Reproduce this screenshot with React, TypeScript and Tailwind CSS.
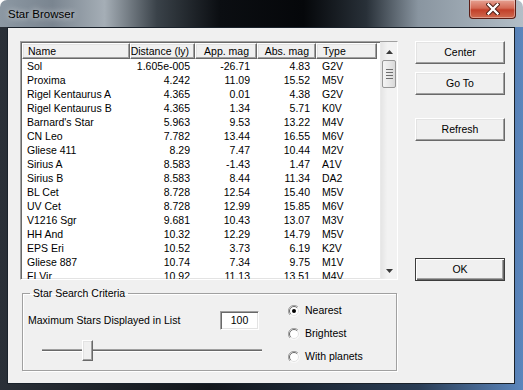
import { Fragment } from "react";

type Star = [string, string, string, string, string];

const STARS: Star[] = [
  ["Sol", "1.605e-005", "-26.71", "4.83", "G2V"],
  ["Proxima", "4.242", "11.09", "15.52", "M5V"],
  ["Rigel Kentaurus A", "4.365", "0.01", "4.38", "G2V"],
  ["Rigel Kentaurus B", "4.365", "1.34", "5.71", "K0V"],
  ["Barnard's Star", "5.963", "9.53", "13.22", "M4V"],
  ["CN Leo", "7.782", "13.44", "16.55", "M6V"],
  ["Gliese 411", "8.29", "7.47", "10.44", "M2V"],
  ["Sirius A", "8.583", "-1.43", "1.47", "A1V"],
  ["Sirius B", "8.583", "8.44", "11.34", "DA2"],
  ["BL Cet", "8.728", "12.54", "15.40", "M5V"],
  ["UV Cet", "8.728", "12.99", "15.85", "M6V"],
  ["V1216 Sgr", "9.681", "10.43", "13.07", "M3V"],
  ["HH And", "10.32", "12.29", "14.79", "M5V"],
  ["EPS Eri", "10.52", "3.73", "6.19", "K2V"],
  ["Gliese 887", "10.74", "7.34", "9.75", "M1V"],
  ["FI Vir", "10.92", "11.13", "13.51", "M4V"],
];

const COLUMNS = [
  { label: "Name", w: "w-[108px]", cell: "justify-start pl-[5px]" },
  { label: "Distance (ly)", w: "w-[65px]", cell: "justify-end pr-[5px]" },
  { label: "App. mag", w: "w-[62px]", cell: "justify-end pr-[7px]" },
  { label: "Abs. mag", w: "w-[59px]", cell: "justify-end pr-[6px]" },
  { label: "Type", w: "w-[61px]", cell: "justify-start pl-[6px]" },
];

const raised =
  "border border-t-white border-l-white border-r-[#696969] border-b-[#696969] shadow-[inset_-1px_-1px_#a0a0a0,inset_1px_1px_#e3e3e3]";
const sunken =
  "border border-t-[#a0a0a0] border-l-[#a0a0a0] border-r-white border-b-white shadow-[inset_1px_1px_#696969,inset_-1px_-1px_#e3e3e3]";

function Button({ label, isDefault }: { label: string; isDefault?: boolean }) {
  return (
    <button
      className={`flex h-[23px] w-[90px] items-center justify-center bg-[#f0f0f0] text-black ${
        isDefault
          ? "border border-[#3c3c3c] shadow-[inset_1px_1px_white,inset_-1px_-1px_#696969,inset_-2px_-2px_#a0a0a0]"
          : raised
      }`}
    >
      {label}
    </button>
  );
}

function Radio({ label, checked }: { label: string; checked?: boolean }) {
  return (
    <div className="flex h-[23px] items-center gap-[5px]">
      <svg width="12" height="12" viewBox="0 0 12 12">
        <circle cx="6" cy="6" r="5.5" fill="#fff" />
        <path d="M10 2 A5.5 5.5 0 0 0 2 10" fill="none" stroke="#a0a0a0" strokeWidth="1" />
        <path d="M9.2 2.8 A4.5 4.5 0 0 0 2.8 9.2" fill="none" stroke="#696969" strokeWidth="1" />
        <path d="M2 10 A5.5 5.5 0 0 0 10 2" fill="none" stroke="#f8f8f8" strokeWidth="1" />
        <path d="M2.8 9.2 A4.5 4.5 0 0 0 9.2 2.8" fill="none" stroke="#e3e3e3" strokeWidth="1" />
        {checked && <circle cx="6" cy="6" r="2" fill="#000" />}
      </svg>
      <span>{label}</span>
    </div>
  );
}

function ScrollArrow({ down }: { down?: boolean }) {
  return (
    <div className="flex h-[17px] items-center justify-center">
      <svg width="7" height="4" viewBox="0 0 7 4">
        <path d={down ? "M0 0 H7 L3.5 4 Z" : "M3.5 0 L7 4 H0 Z"} fill="#3a3a3a" />
      </svg>
    </div>
  );
}

export default function App() {
  return (
    <div className="flex h-[390px] w-[523px] flex-col overflow-hidden rounded-t-[7px] bg-[linear-gradient(90deg,#8c98a3_0%,#7a8590_10%,#a5aeb6_20%,#3a4249_30%,#0b0e12_42%,#05070a_58%,#283038_70%,#8995a0_80%,#b3bec7_100%)] font-['Liberation_Sans',Arial,sans-serif] text-[10.5px] leading-[13px] text-black">
      {/* title bar */}
      <div className="flex h-[27px] shrink-0 items-start justify-between">
        <span className="pl-2 pt-[7px] text-[11.5px] leading-[14px] text-black [text-shadow:0_0_6px_rgba(255,255,255,0.9)]">
          Star Browser
        </span>
        <div className="mr-[7px] flex h-[19px] w-[47px] items-center justify-center rounded-b-[4px] border border-t-0 border-[#5b1e16] bg-[linear-gradient(180deg,#e6a192_0%,#d46a55_45%,#c2402a_55%,#cf6a4f_100%)] shadow-[inset_0_0_0_1px_rgba(255,255,255,0.35)]">
          <svg width="14" height="12" viewBox="0 0 14 12">
            <path d="M2.5 1.5 L11.5 10.5 M11.5 1.5 L2.5 10.5" stroke="#4a1a12" strokeWidth="4.2" strokeLinecap="square" />
            <path d="M2.5 1.5 L11.5 10.5 M11.5 1.5 L2.5 10.5" stroke="#fff" strokeWidth="2.4" strokeLinecap="square" />
          </svg>
        </div>
      </div>

      {/* frame + client */}
      <div className="flex flex-1 bg-[linear-gradient(90deg,#2a3038_0%,#12161b_40%,#2a3d55_80%,#5b86bd_100%)] pb-[6px] pl-[7px] pr-[8px]">
        <div className="flex flex-1 border border-[#1a222b] bg-[#f0f0f0] pl-[12px] pt-[13px]">
          <div className="flex w-[378px] flex-col">
            {/* list view */}
            <div className={`flex h-[239px] w-[378px] bg-white ${sunken}`}>
              <div className="flex-1 overflow-hidden pl-px pt-px">
                <div className="flex h-[16px]">
                  {COLUMNS.map((c) => (
                    <div
                      key={c.label}
                      className={`flex shrink-0 items-center overflow-hidden whitespace-nowrap ${c.w} ${c.cell} bg-[#f0f0f0] ${raised}`}
                    >
                      {c.label}
                    </div>
                  ))}
                </div>
                {STARS.map((s) => (
                  <div key={s[0]} className="flex h-[14px] items-center">
                    {COLUMNS.map((c, i) => (
                      <Fragment key={c.label}>
                        <div className={`flex shrink-0 ${c.w} ${c.cell} whitespace-nowrap`}>{s[i]}</div>
                      </Fragment>
                    ))}
                  </div>
                ))}
              </div>
              {/* scrollbar */}
              <div className="flex w-[17px] flex-col border-l border-[#e9e9e9] bg-[linear-gradient(90deg,#e5e5e5,#f2f2f2_40%,#f2f2f2)] pt-px">
                <ScrollArrow />
                <div className="mx-[1px] flex h-[28px] flex-col items-center justify-center gap-[2px] rounded-[2px] border border-[#979797] bg-[linear-gradient(90deg,#f4f4f4,#e8e8e8_50%,#d9d9d9)]">
                  <div className="h-px w-[7px] bg-[#6e6e6e]" />
                  <div className="h-px w-[7px] bg-[#6e6e6e]" />
                  <div className="h-px w-[7px] bg-[#6e6e6e]" />
                  <div className="h-px w-[7px] bg-[#6e6e6e]" />
                </div>
                <div className="flex-1" />
                <ScrollArrow down />
              </div>
            </div>

            {/* search criteria */}
            <fieldset className="ml-[2px] mt-[7px] h-[84px] w-[375px] border border-[#a0a0a0] shadow-[1px_1px_0_white,inset_1px_1px_0_white]">
              <legend className="ml-[7px] px-[3px] leading-[13px]">Star Search Criteria</legend>
              <div className="flex items-start">
                <div className="flex flex-col pl-[5px] pt-[11px]">
                  <div className="flex items-center">
                    <span className="w-[192px]">Maximum Stars Displayed in List</span>
                    <div className={`flex h-[19px] w-[39px] items-center justify-center bg-white ${sunken}`}>
                      100
                    </div>
                  </div>
                  <div className="relative ml-[14px] mt-[10px] h-[21px] w-[220px]">
                    <div className="mt-[9px] h-[3px] border-t border-b border-t-[#a0a0a0] border-b-white bg-[#696969]" />
                    <div className={`absolute left-[40px] top-0 h-[21px] w-[11px] bg-[#f0f0f0] ${raised}`} />
                  </div>
                </div>
                <div className="ml-[26px] -mt-[1px] flex flex-col">
                  <Radio label="Nearest" checked />
                  <Radio label="Brightest" />
                  <Radio label="With planets" />
                </div>
              </div>
            </fieldset>
          </div>

          {/* buttons */}
          <div className="ml-[17px] flex flex-col">
            <Button label="Center" />
            <div className="mt-[8px]">
              <Button label="Go To" />
            </div>
            <div className="mt-[23px]">
              <Button label="Refresh" />
            </div>
            <div className="mt-[117px]">
              <Button label="OK" isDefault />
            </div>
          </div>
        </div>
      </div>
    </div>
  );
}
